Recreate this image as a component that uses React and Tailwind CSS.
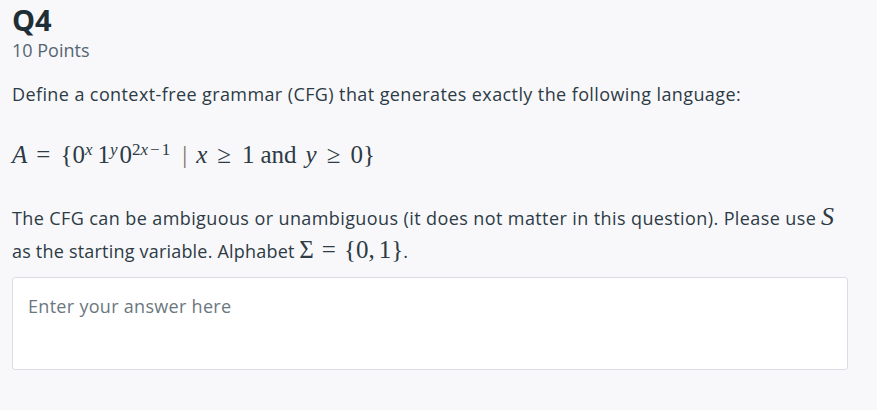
export default function App() {
  const serif = { fontFamily: '"Liberation Serif", serif' };
  return (
    <div
      className="min-h-screen w-full bg-[#f8f8fb] px-3 pt-[2px] text-[#2d3b45]"
      style={{ fontFamily: '"Open Sans", "Noto Sans", sans-serif' }}
    >
      <h2 className="text-[29px] font-bold leading-[36px] text-[#1f2d36]">Q4</h2>
      <div className="text-[18px] leading-[24px] text-[#556572]">10 Points</div>

      <p className="mt-[19px] text-[18px] leading-[26px] tracking-[0.4px]">
        Define a context-free grammar (CFG) that generates exactly the following language:
      </p>

      {/* the set A, spaced roughly like KaTeX output */}
      <div className="mt-[31px] whitespace-nowrap text-[25px] leading-[34px] text-[#2d3b45]" style={serif}>
        <i>A</i>
        <span className="ml-[9px]">=</span>
        <span className="ml-[10px]">{'{'}</span>
        <span>0</span>
        <sup className="text-[17px] italic">x</sup>
        <span className="ml-[5px]">1</span>
        <sup className="text-[17px] italic">y</sup>
        <span className="ml-[2px]">0</span>
        <sup className="text-[17px]">
          2<i>x</i>
          <span className="mx-[2px]">−</span>1
        </sup>
        <span className="ml-[12px] text-[#7a6f66]">|</span>
        <i className="ml-[9px]">x</i>
        <span className="ml-[10px]">≥</span>
        <span className="ml-[11px]">1</span>
        <span className="ml-[6px]">and</span>
        <i className="ml-[9px]">y</i>
        <span className="ml-[10px]">≥</span>
        <span className="ml-[10px]">0</span>
        <span>{'}'}</span>
      </div>

      <p className="mt-[29px] text-[18px] leading-[31px]">
        <span className="tracking-[0.4px]">
          The CFG can be ambiguous or unambiguous (it does not matter in this question). Please use
        </span>{' '}
        <i className="text-[26px]" style={serif}>
          S
        </i>
        <br />
        <span className="tracking-[0.2px]">as the starting variable. Alphabet</span>{' '}
        <span className="whitespace-nowrap text-[25px]" style={serif}>
          <span>Σ</span>
          <span className="ml-[8px]">=</span>
          <span className="ml-[8px]">{'{'}</span>
          <span>0</span>
          <span>,</span>
          <span className="ml-[4px]">1</span>
          <span>{'}'}</span>
        </span>
        .
      </p>

      <div className="mt-[10px] h-[93px] w-[836px] rounded-[3px] border border-[#dcdce6] bg-white px-[15px] pt-[16px]">
        <div className="text-[18px] leading-[24px] tracking-[0.3px] text-[#6b7780]">Enter your answer here</div>
      </div>
    </div>
  );
}
